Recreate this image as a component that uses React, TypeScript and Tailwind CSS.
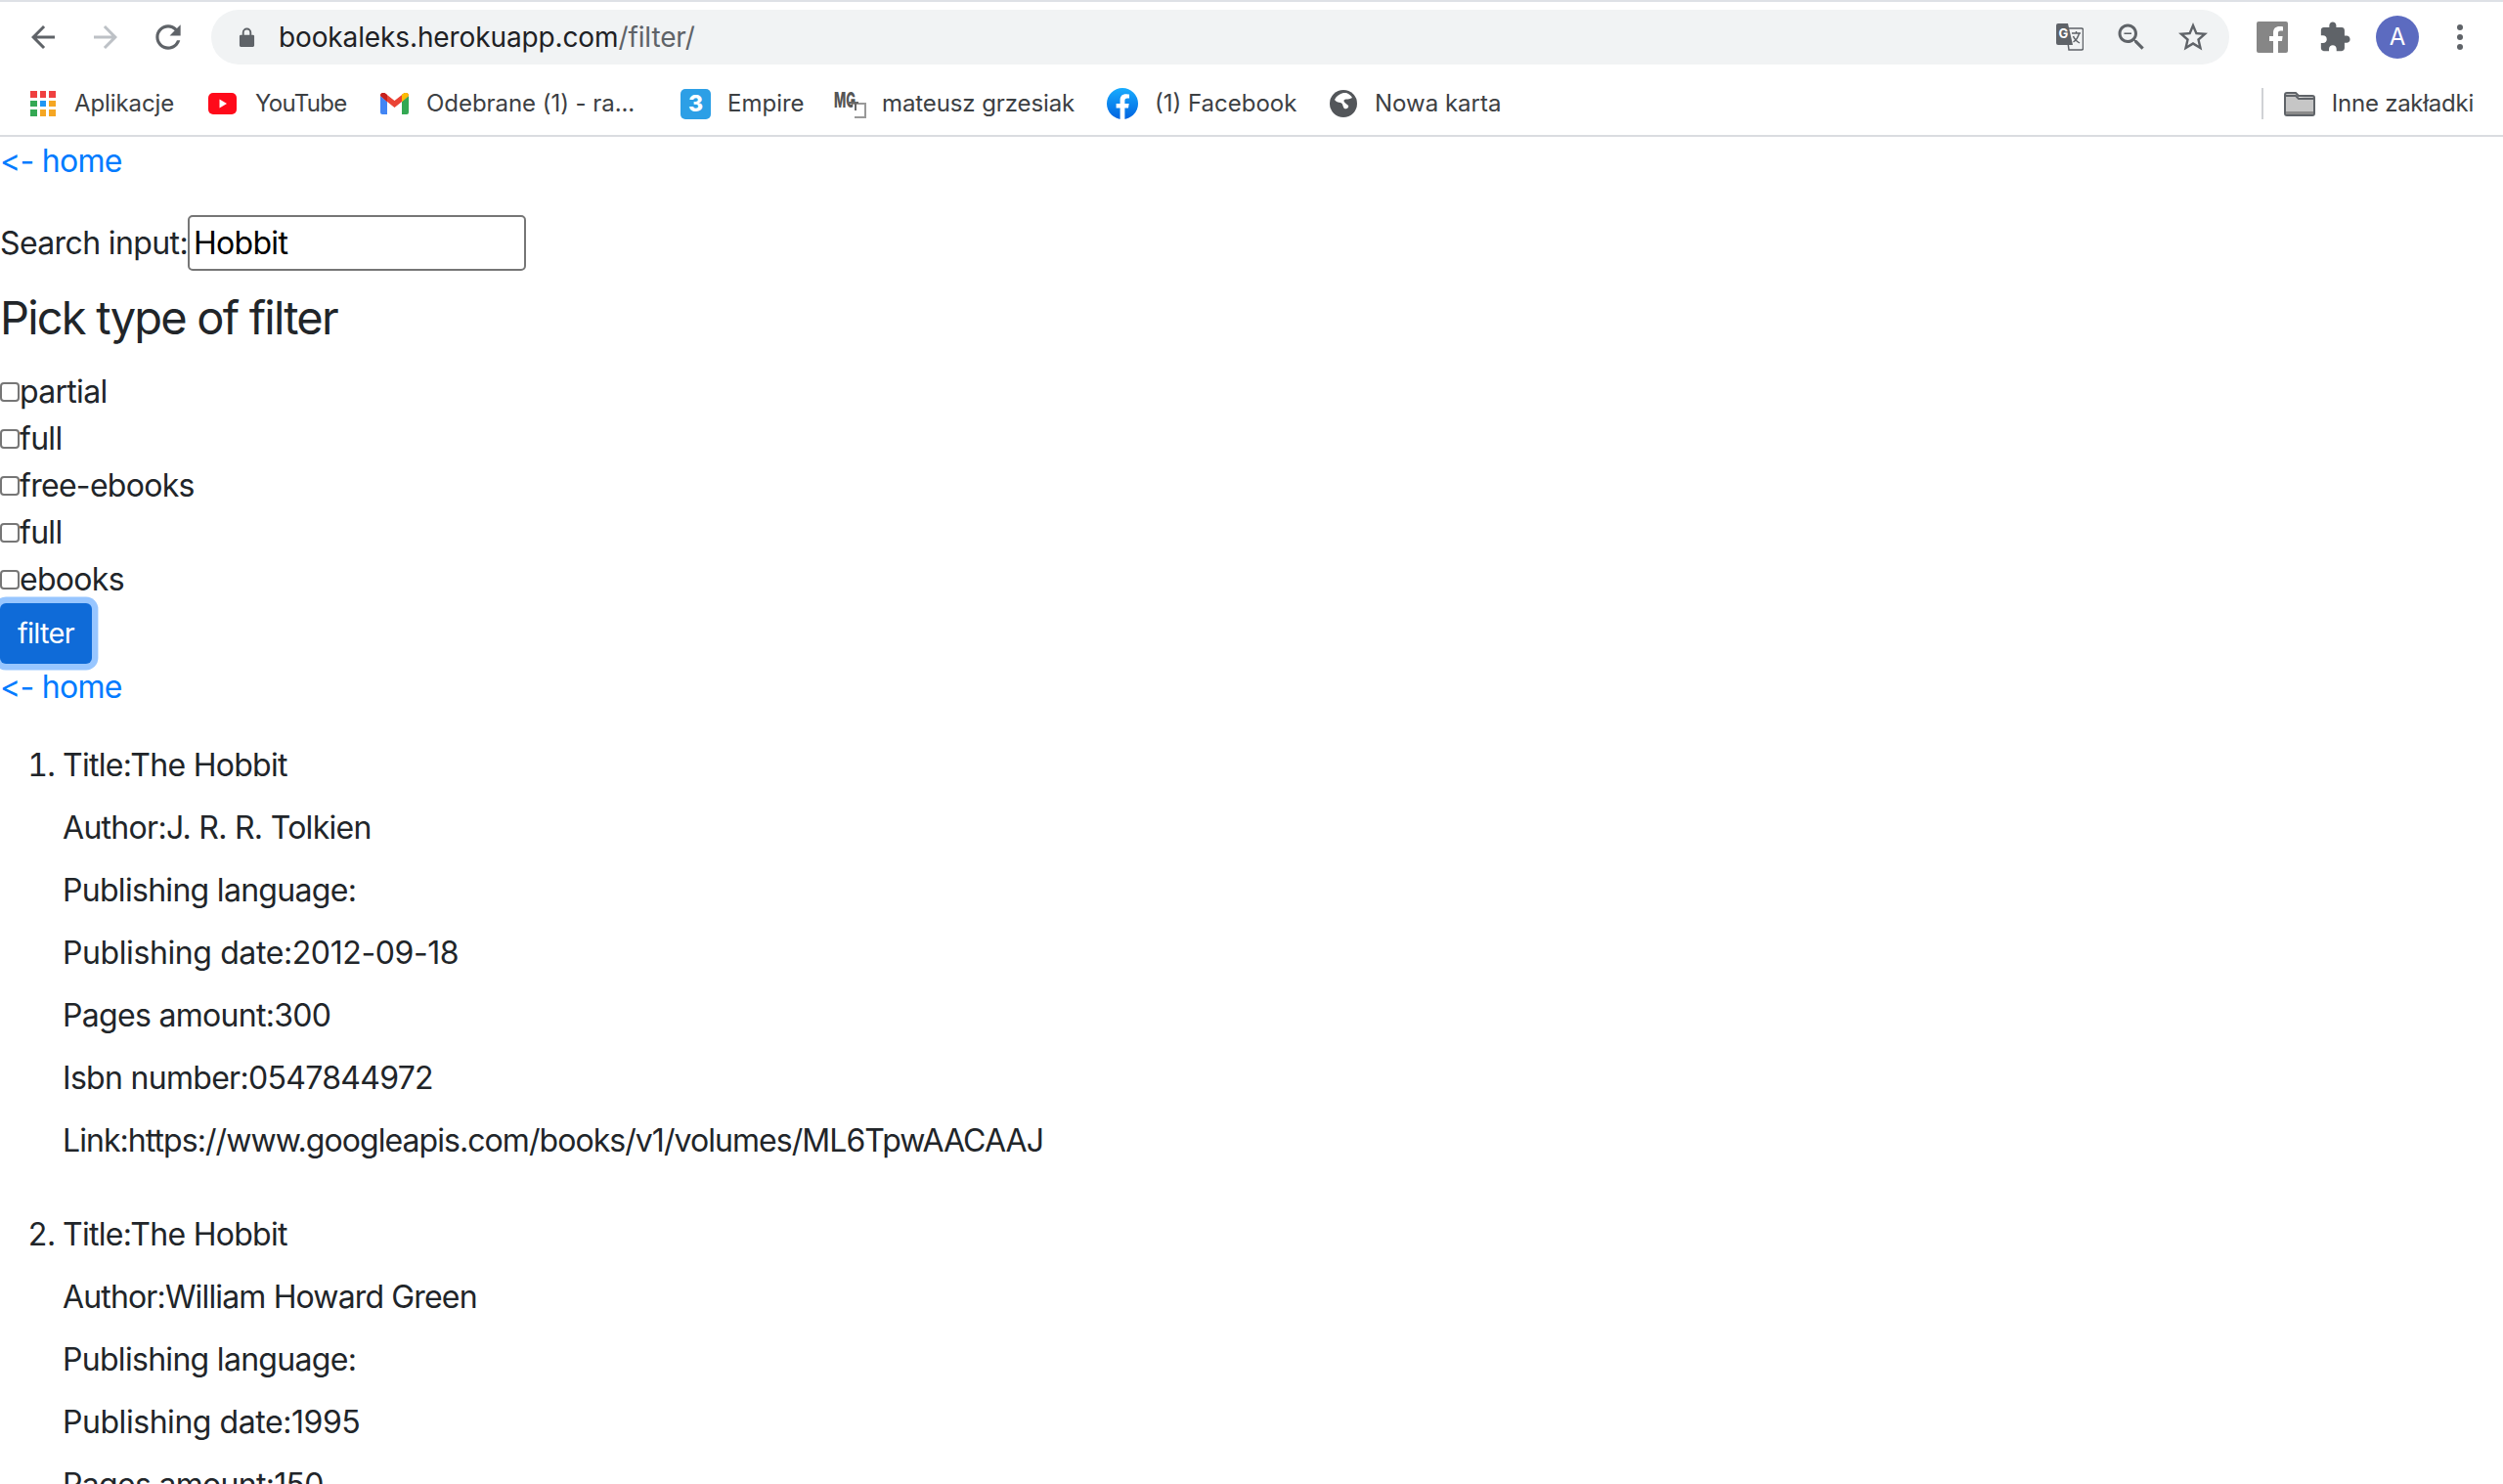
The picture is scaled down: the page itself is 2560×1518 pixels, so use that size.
import React from "react";

const sans = "font-['Inter','Liberation_Sans',sans-serif]";

function Bookmark({ icon, label, className, labelClass = "tracking-normal" }: { icon: React.ReactNode; label: string; className: string; labelClass?: string }) {
  return (
    <div className={`flex items-center shrink-0 ${className}`}>
      {icon}
      <span className={`whitespace-nowrap text-[24px] text-[#3c4043] ${labelClass}`}>{label}</span>
    </div>
  );
}

function AppsIcon() {
  const colors = ["#ef4040", "#ef4040", "#ef4040", "#34a853", "#2196f3", "#f5a623", "#34a853", "#f5a623", "#f5a623"];
  return (
    <div className="grid grid-cols-3 gap-[3px] w-[26px] h-[26px] mr-[19px]">
      {colors.map((c, i) => (
        <span key={i} className="block w-[6.6px] h-[6.6px]" style={{ background: c }} />
      ))}
    </div>
  );
}

function BookEntry({ rows }: { rows: [string, string][] }) {
  return (
    <li className="mb-[48px]">
      {rows.map(([text, cls], i) => (
        <p key={i} className={`mb-[16px] leading-[48px] ${cls}`}>{text}</p>
      ))}
    </li>
  );
}

export default function App() {
  return (
    <div className={`${sans} h-[1518px] overflow-hidden bg-white text-[#212529]`}>
      <div className="h-[2px] bg-[#dee1e6]" />
      {/* toolbar */}
      <div className="flex items-center h-[72px]">
        <svg viewBox="0 0 24 24" className="ml-[26px] w-[36px] h-[36px]" fill="#5f6368"><path d="M20 11H7.830l5.590-5.590L12 4l-8 8 8 8 1.410-1.410L7.830 13H20v-2z" /></svg>
        <svg viewBox="0 0 24 24" className="ml-[28px] w-[36px] h-[36px]" fill="#bdc1c6"><path d="M4 11h12.170l-5.590-5.590L12 4l8 8-8 8-1.410-1.410L16.170 13H4v-2z" /></svg>
        <svg viewBox="0 0 24 24" className="ml-[27px] w-[38px] h-[38px]" fill="#5f6368"><path d="M17.650 6.350C16.200 4.900 14.210 4 12 4c-4.420 0-7.990 3.580-7.990 8s3.570 8 7.990 8c3.730 0 6.840-2.550 7.730-6h-2.080c-.82 2.330-3.040 4-5.650 4-3.310 0-6-2.690-6-6s2.690-6 6-6c1.660 0 3.140.69 4.220 1.780L13 11h7V4l-2.350 2.350z" /></svg>
        <div className="ml-[25px] w-[2064px] h-[56px] rounded-full bg-[#f1f3f4] flex items-center">
          <svg viewBox="0 0 18 22" className="ml-[28px] w-[17px] h-[21px]" fill="#5f6368"><path d="M15.500 8H14V5.500a5 5 0 0 0-10 0V8H2.500A1.500 1.500 0 0 0 1 9.500v10A1.500 1.500 0 0 0 2.500 21h13a1.500 1.500 0 0 0 1.500-1.500v-10A1.500 1.500 0 0 0 15.500 8zM6 8V5.500a3 3 0 0 1 6 0V8z" /></svg>
          <span className="ml-[24px] text-[28px] tracking-[-0.12px] text-[#202124]">
            bookaleks.herokuapp.com<span className="text-[#5f6368]">/filter/</span>
          </span>
          <div className="ml-auto flex items-center">
            <svg viewBox="0 0 28 28" className="w-[28px] h-[28px]">
              <path d="M10 5h16a1.500 1.500 0 0 1 1.500 1.500v19A1.500 1.500 0 0 1 26 27H13z" fill="#f1f3f4" stroke="#5f6368" strokeWidth="1.500" />
              <path d="M2 0h10l5 22H2a2 2 0 0 1-2-2V2a2 2 0 0 1 2-2z" fill="#5f6368" />
              <text x="2.500" y="15" fontSize="13" fontWeight="700" fill="#fff">G</text>
              <path d="M16 10h9M20.500 8v2M23.500 10c-1 4-3 7-6 9M17.500 13c1 3 3 5 6.500 7" fill="none" stroke="#5f6368" strokeWidth="1.400" />
            </svg>
            <svg viewBox="0 0 24 24" className="ml-[31px] w-[36px] h-[36px]" fill="#5f6368"><path d="M15.500 14h-.79l-.28-.27C15.410 12.590 16 11.110 16 9.500 16 5.910 13.090 3 9.500 3S3 5.910 3 9.500 5.910 16 9.500 16c1.610 0 3.090-.59 4.230-1.570l.27.28v.79l5 4.990L20.490 19l-4.990-5zm-6 0C7.010 14 5 11.990 5 9.500S7.010 5 9.500 5 14 7.010 14 9.500 11.990 14 9.500 14zM7 9h5v1H7z" /></svg>
            <svg viewBox="0 0 24 24" className="ml-[27px] mr-[19px] w-[36px] h-[36px]" fill="#5f6368"><path d="M22 9.240l-7.190-.62L12 2 9.190 8.630 2 9.240l5.460 4.730L5.820 21 12 17.270 18.180 21l-1.630-7.030L22 9.240zM12 15.400l-3.760 2.270 1-4.280-3.320-2.880 4.380-.38L12 6.100l1.710 4.040 4.380.38-3.320 2.880 1 4.280L12 15.400z" /></svg>
          </div>
        </div>
        <svg viewBox="0 0 32 32" className="ml-[28px] w-[32px] h-[32px]">
          <rect width="32" height="32" rx="2" fill="#868686" />
          <path d="M22 32V20h4l.6-5H22v-3c0-1.400.4-2.400 2.400-2.400H27V5.200C26.500 5.100 25 5 23.300 5 19.700 5 17 7.200 17 11.400V15h-4v5h4v12z" fill="#fff" />
        </svg>
        <svg viewBox="0 0 24 24" className="ml-[31px] w-[34px] h-[34px]" fill="#5f6368"><path d="M20.500 11H19V7c0-1.100-.9-2-2-2h-4V3.500C13 2.120 11.880 1 10.500 1S8 2.120 8 3.500V5H4c-1.100 0-1.990.9-1.990 2v3.800H3.500c1.490 0 2.700 1.210 2.700 2.700s-1.210 2.700-2.700 2.700H2V20c0 1.100.9 2 2 2h3.800v-1.500c0-1.490 1.210-2.700 2.700-2.700 1.490 0 2.700 1.210 2.700 2.700V22H17c1.100 0 2-.9 2-2v-4h1.500c1.380 0 2.500-1.120 2.500-2.500S21.880 11 20.500 11z" /></svg>
        <div className="ml-[25px] w-[44px] h-[44px] rounded-full bg-[#5c6bc0] flex items-center justify-center text-white text-[24px]">A</div>
        <div className="ml-[39px] flex flex-col gap-[4px]">
          <span className="block w-[6px] h-[6px] rounded-full bg-[#5f6368]" />
          <span className="block w-[6px] h-[6px] rounded-full bg-[#5f6368]" />
          <span className="block w-[6px] h-[6px] rounded-full bg-[#5f6368]" />
        </div>
      </div>
      {/* bookmarks */}
      <div className="flex items-center h-[66px] pl-[31px] border-b-2 border-[#dadce0]">
        <Bookmark className="w-[182px]" icon={<AppsIcon />} label="Aplikacje" labelClass="tracking-[-0.1px]" />
        <Bookmark
          className="w-[176px]"
          labelClass="tracking-[-0.7px]"
          icon={
            <svg viewBox="0 0 29 22" className="w-[29px] h-[22px] mr-[19px]">
              <rect width="29" height="22" rx="5" fill="#ff0a1a" />
              <path d="M11.500 6.500v9l7.500-4.500z" fill="#fff" />
            </svg>
          }
          label="YouTube"
        />
        <Bookmark
          className="w-[307px]"
          labelClass="tracking-[-0.05px]"
          icon={
            <svg viewBox="0 0 29 22" className="w-[29px] h-[22px] mr-[18px]">
              <path d="M0 3v17a2 2 0 0 0 2 2h5V9z" fill="#4285f4" />
              <path d="M29 3v17a2 2 0 0 1-2 2h-5V9z" fill="#34a853" />
              <path d="M0 3c0-3 3-4 5-2.500L14.500 8 24 .5c2-1.500 5-.5 5 2.500l-7 6-7.500 6L7 9z" fill="#ea4335" />
              <path d="M22 1.500 24 .5c2-1.500 5-.5 5 2.500l-7 6z" fill="#fbbc04" />
              <path d="M0 3c0-3 3-4 5-2.500L7 2v7z" fill="#c5221f" />
            </svg>
          }
          label="Odebrane (1) - ra..."
        />
        <Bookmark
          className="w-[157px]"
          icon={
            <div className="w-[31px] h-[31px] rounded-[5px] bg-[#2c9fe6] mr-[17px] flex items-center justify-center text-white font-extrabold text-[23px] leading-none">3</div>
          }
          label="Empire"
        />
        <Bookmark
          className="w-[279px]"
          labelClass="tracking-[-0.1px]"
          icon={
            <svg viewBox="0 0 33 30" className="w-[33px] h-[30px] mr-[16px]">
              <text x="0" y="19" fontSize="22" fontWeight="800" fill="#555" textLength="22" lengthAdjust="spacingAndGlyphs">MG</text>
              <path d="M19 15h13v14H21" fill="#fff" stroke="#999" strokeWidth="2" />
              <path d="M14 14h11M22 14v8" stroke="#666" strokeWidth="2" />
            </svg>
          }
          label="mateusz grzesiak"
        />
        <Bookmark
          className="w-[228px]"
          icon={
            <svg viewBox="0 0 32 32" className="w-[32px] h-[32px] mr-[17px]">
              <defs>
                <linearGradient id="fbg" x1="0" y1="0" x2="0" y2="1">
                  <stop offset="0" stopColor="#18acfe" />
                  <stop offset="1" stopColor="#0163e0" />
                </linearGradient>
              </defs>
              <circle cx="16" cy="16" r="16" fill="url(#fbg)" />
              <path d="M22 20.500l.7-4.500h-4.300v-3c0-1.300.6-2.500 2.600-2.500h2V6.600S21.200 6.300 19.500 6.300c-3.600 0-5.900 2.100-5.900 6V16H9.600v4.500h4V32h4.800V20.500z" fill="#fff" />
            </svg>
          }
          label="(1) Facebook"
        />
        <Bookmark
          className="w-[180px]"
          icon={
            <svg viewBox="0 0 28 28" className="w-[28px] h-[28px] mr-[18px]">
              <circle cx="14" cy="14" r="14" fill="#53565a" />
              <path d="M17 3c3 1 5 3 6 5-3 2-6 1-8 2-2 2 2 4 4 6 1 2-2 4-4 3-2-2-1-5-4-6-2 0-5-1-6-3 2-4 5-6 9-7z" fill="#fff" />
            </svg>
          }
          label="Nowa karta"
        />
        <div className="ml-auto w-[2px] h-[32px] bg-[#d0d2d5]" />
        <svg viewBox="0 0 32 25" className="ml-[21px] mr-[17px] w-[32px] h-[25px]">
          <path d="M1 22V3a2 2 0 0 1 2-2h9l3 3h14a2 2 0 0 1 2 2v16a2 2 0 0 1-2 2H3a2 2 0 0 1-2-2z" fill="#c6c6c6" stroke="#5f6368" strokeWidth="2" />
          <path d="M1 4h11l3 3h16" fill="#fff" stroke="#5f6368" strokeWidth="2" />
          <rect x="2" y="20" width="28" height="3" fill="#8a8a8a" />
        </svg>
        <span className="mr-[30px] whitespace-nowrap text-[24px] tracking-[-0.25px] text-[#3c4043]">Inne zakładki</span>
      </div>
      {/* page */}
      <div className="pt-[1px] text-[32px] leading-[48px] tracking-[-0.7px]">
        <a className="block text-[#007bff]">&lt;- home</a>
        <form className="mt-[31px]">
          <div className="flex items-center h-[57px]">
            <label className="tracking-[-0.62px]">Search input:</label>
            <input readOnly value="Hobbit" className="w-[346px] h-[57px] border-2 border-[#767676] rounded-[5px] pl-[4px] text-black outline-none" />
          </div>
          <h4 className="mt-[19px] mb-[23px] text-[47px] leading-[58px] font-normal tracking-[-1.8px]">Pick type of filter</h4>
          {["partial", "full", "free-ebooks", "full", "ebooks"].map((t, i) => (
            <div key={i} className="flex items-center h-[48px]">
              <input type="checkbox" className="appearance-none w-[20px] h-[20px] border-2 border-[#767676] rounded-[4px] bg-white" />
              <span>{t}</span>
            </div>
          ))}
          <button type="button" className="block w-[94px] h-[62px] rounded-[6px] bg-[#0f6bd8] text-white text-[29px] shadow-[0_0_0_6.400px_#98c6ff]">filter</button>
        </form>
        <a className="block text-[#007bff]">&lt;- home</a>
        <ol className="mt-[32px] pl-[64px] list-decimal">
          <BookEntry
            rows={[
              ["Title:The Hobbit", ""],
              ["Author:J. R. R. Tolkien", ""],
              ["Publishing language:", ""],
              ["Publishing date:2012-09-18", "tracking-[-0.4px]"],
              ["Pages amount:300", ""],
              ["Isbn number:0547844972", ""],
              ["Link:https://www.googleapis.com/books/v1/volumes/ML6TpwAACAAJ", "tracking-[-0.94px]"],
            ]}
          />
          <BookEntry
            rows={[
              ["Title:The Hobbit", ""],
              ["Author:William Howard Green", "tracking-[-0.85px]"],
              ["Publishing language:", ""],
              ["Publishing date:1995", "tracking-[-0.45px]"],
              ["Pages amount:150", ""],
            ]}
          />
        </ol>
      </div>
    </div>
  );
}
